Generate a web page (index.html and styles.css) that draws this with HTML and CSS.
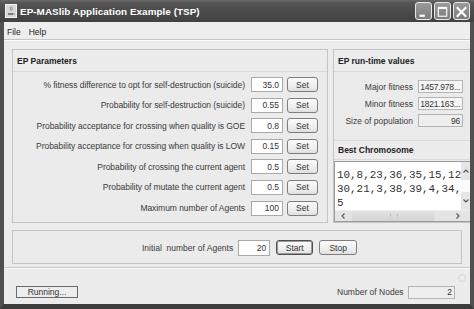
FILE: index.html
```html
<!DOCTYPE html>
<html>
<head>
<meta charset="utf-8">
<link rel="stylesheet" href="styles.css">
</head>
<body>
<div class="window">
  <div class="titlebar">
    <span class="app-icon">
      <svg width="12" height="14" viewBox="0 0 12 14">
        <rect x="0.5" y="0.5" width="11" height="13" fill="#d8d8d8" stroke="#f4f4f4"/>
        <path d="M3 9 h5 v2 h-5 z M8 9.5 h1.5 v1 h-1.5" fill="#7a7a7a"/>
        <path d="M5 3 q1.5 2 0 3.5 M6.5 2.5 q1.5 2 0 4" stroke="#8a8a8a" fill="none" stroke-width="0.9"/>
      </svg>
    </span>
    <span class="title">EP-MASlib Application Example (TSP)</span>
    <div class="controls">
      <span class="wbtn">
        <svg width="17" height="18" viewBox="0 0 17 18"><rect x="4" y="12" width="6" height="2.5" fill="#fff"/></svg>
      </span>
      <span class="wbtn">
        <svg width="16" height="18" viewBox="0 0 16 18"><rect x="3.5" y="4.5" width="9" height="9" fill="none" stroke="#fff" stroke-width="1.2"/><rect x="3.5" y="3.5" width="9" height="2.2" fill="#fff"/></svg>
      </span>
      <span class="wbtn">
        <svg width="17" height="18" viewBox="0 0 17 18"><path d="M4 4.5 L13 13.5 M13 4.5 L4 13.5" stroke="#fff" stroke-width="2.4" stroke-linecap="square"/></svg>
      </span>
    </div>
  </div>
  <div class="frame">
    <div class="menubar"><span class="menu">File</span><span class="menu">Help</span></div>
    <div class="content">
      <div class="top-row">
        <section class="panel params">
          <div class="panel-head">EP Parameters</div>
          <div class="param-grid">
            <span class="lbl">% fitness difference to opt for self-destruction (suicide)</span><span class="field">35.0</span><span class="btn">Set</span>
            <span class="lbl">Probability for self-destruction (suicide)</span><span class="field">0.55</span><span class="btn">Set</span>
            <span class="lbl">Probability acceptance for crossing when quality is GOE</span><span class="field">0.8</span><span class="btn">Set</span>
            <span class="lbl">Probability acceptance for crossing when quality is LOW</span><span class="field">0.15</span><span class="btn">Set</span>
            <span class="lbl">Probability of crossing the current agent</span><span class="field">0.5</span><span class="btn">Set</span>
            <span class="lbl">Probability of mutate the current agent</span><span class="field">0.5</span><span class="btn">Set</span>
            <span class="lbl">Maximum number of Agents</span><span class="field">100</span><span class="btn">Set</span>
          </div>
        </section>
        <section class="panel runtime">
          <div class="panel-head">EP run-time values</div>
          <div class="rt-grid">
            <span class="lbl">Major fitness</span><span class="field ro">1457.978...</span>
            <span class="lbl">Minor fitness</span><span class="field ro">1821.163...</span>
            <span class="lbl">Size of population</span><span class="field ro dim">96</span>
          </div>
          <div class="panel-head sub">Best Chromosome</div>
          <div class="chromo">
            <div class="chromo-main">
              <div class="chromo-text">10,8,23,36,35,15,12<br>30,21,3,38,39,4,34,<br>5</div>
              <div class="vscroll">
                <span class="arrow up">
                  <svg width="8" height="6" viewBox="0 0 8 6"><path d="M1.5 4.5 L4 2 L6.5 4.5" stroke="#555" fill="none" stroke-width="1.1"/></svg>
                </span>
                <span class="vtrack"></span>
                <span class="arrow dn">
                  <svg width="8" height="6" viewBox="0 0 8 6"><path d="M1.5 1.5 L4 4 L6.5 1.5" stroke="#555" fill="none" stroke-width="1.1"/></svg>
                </span>
              </div>
            </div>
            <div class="hscroll">
              <span class="harrow">
                <svg width="6" height="8" viewBox="0 0 6 8"><path d="M4.5 1.5 L2 4 L4.5 6.5" stroke="#555" fill="none" stroke-width="1.1"/></svg>
              </span>
              <span class="hthumb"><span class="grip"></span></span>
              <span class="harrow">
                <svg width="6" height="8" viewBox="0 0 6 8"><path d="M1.5 1.5 L4 4 L1.5 6.5" stroke="#555" fill="none" stroke-width="1.1"/></svg>
              </span>
            </div>
          </div>
        </section>
      </div>
      <section class="panel agents">
        <span class="lbl">Initial&nbsp; number of Agents</span>
        <span class="field wide">20</span>
        <span class="btn start">Start</span>
        <span class="btn stop">Stop</span>
      </section>
      <div class="sep"></div>
      <div class="status">
        <div class="busy-line"><span class="busy"></span></div>
        <div class="status-row">
          <span class="running">Running...</span>
          <span class="nodes-lbl">Number of Nodes</span>
          <span class="field ro dim nodes">2</span>
        </div>
      </div>
    </div>
  </div>
</div>
</body>
</html>
```
FILE: styles.css
```css
* { box-sizing: border-box; }
html, body { margin: 0; padding: 0; background: #4a4a4a; }
body { font-family: "Liberation Sans", Arial, sans-serif; font-size: 8.5px; color: #3a3a3a; }

.window { width: 474px; height: 309px; display: flex; flex-direction: column; overflow: hidden; }

.titlebar {
  height: 22px; flex: none; display: flex; align-items: center;
  background: linear-gradient(#6a6a6a 0px, #555 3px, #4a4a4a 12px, #424242 22px);
  padding-left: 5px;
}
.app-icon { width: 12px; height: 14px; display: flex; }
.title { color: #fff; font-weight: bold; font-size: 9.9px; margin-left: 3px; letter-spacing: 0.05px; }
.controls { margin-left: auto; display: flex; gap: 2px; padding-right: 4px; }
.wbtn {
  width: 17px; height: 18px; border: 1px solid #e8e8e8; border-radius: 3px;
  background: linear-gradient(#9a9a9a, #7d7d7d); display: flex;
}
.wbtn svg { display: block; }

.frame {
  flex: 1; display: flex; flex-direction: column;
  border-left: 4px solid #505050; border-right: 4px solid #505050; border-bottom: 5px solid #3c3c3c;
  background: #ececec; min-height: 0;
}
.menubar {
  height: 18px; flex: none; display: flex; align-items: center; gap: 8px;
  padding-left: 3px; background: #eeeeee; border-bottom: 1px solid #c6c6c6;
  box-shadow: 0 1px 0 #fafafa;
}
.menu { font-size: 8.5px; color: #222; padding-top: 2px; }

.content { flex: 1; overflow: hidden; padding: 9px 0 0 8px; display: flex; flex-direction: column; }

.top-row { display: flex; gap: 5px; height: 174px; flex: none; }

.panel { border: 1px solid #c4c4c4; background: #ebebeb; }
.panel-head {
  height: 22px; font-weight: bold; color: #222; font-size: 8.5px;
  display: flex; align-items: center; padding-left: 4px;
  border-bottom: 1px solid #dadada; background: #ececec;
}

.params { width: 316px; flex: none; }
.param-grid {
  display: grid; grid-template-columns: 233px 33px 31px; column-gap: 4px;
  grid-auto-rows: 15px; row-gap: 5.6px; padding-top: 5px; align-items: center;
}
.param-grid .lbl { text-align: right; padding-right: 1px; white-space: nowrap; letter-spacing: -0.05px; }
.param-grid .field { margin-left: 1px; }

.field {
  height: 15px; background: #fff; border: 1px solid #a9a9a9;
  display: flex; align-items: center; justify-content: flex-end; padding-right: 3px;
  color: #333; white-space: nowrap; overflow: hidden;
}
.field.ro { background: #f6f6f6; border-color: #b4b4b4; height: 13px; padding-right: 2px; letter-spacing: -0.25px; }
.field.dim { background: #eeeeee; }

.btn {
  height: 15px; border: 1px solid #7e7e7e; border-radius: 3px;
  background: linear-gradient(#fbfbfb, #ececec 70%, #dedede);
  display: flex; align-items: center; justify-content: center; color: #333;
}

.runtime { width: 141px; flex: none; display: flex; flex-direction: column; }
.rt-grid {
  display: grid; grid-template-columns: 79px 45px; column-gap: 5px;
  grid-template-rows: 13px 13px 13px; row-gap: 4px; padding-top: 8px; align-items: center;
}
.rt-grid .lbl { text-align: right; white-space: nowrap; }
.panel-head.sub { margin-top: 13px; height: 20px; border-top: 1px solid #dadada; }

.chromo {
  margin-top: 1px; flex: 1; margin-right: 3px; border: 1px solid #9c9c9c; border-right: none;
  background: #fff; display: flex; flex-direction: column; overflow: hidden;
}
.chromo-main { flex: 1; display: flex; }
.chromo-text {
  flex: 1; font-family: "Liberation Mono", "Courier New", monospace; font-size: 10.9px;
  line-height: 14px; padding: 6px 0 0 2px; color: #333; white-space: nowrap; overflow: hidden;
}
.vscroll { width: 9px; display: flex; flex-direction: column; background: #ededed; }
.vscroll .arrow { height: 18px; display: flex; align-items: center; justify-content: center; background: #e6e6e6; }
.vtrack { flex: 1; background: #fbfbfb; }
.hscroll {
  height: 11px; flex: none; display: flex; align-items: center; background: #e4e4e4;
  padding: 0 2px; border-top: 1px solid #efefef;
}
.harrow { width: 12px; height: 10px; display: flex; align-items: center; justify-content: center; }
.hthumb {
  height: 10px; width: 83px; margin-left: 3px; background: linear-gradient(#e3e3e3, #d4d4d4);
  border-radius: 2px; display: flex; align-items: center; justify-content: center;
}
.grip { width: 8px; height: 4px; border-left: 1px dotted #bbb; border-right: 1px dotted #bbb; }
.hscroll .harrow:last-child { margin-left: auto; margin-right: 4px; }

.agents {
  margin-top: 7px; width: 450px; height: 34px; flex: none;
  display: flex; align-items: center; padding-left: 129px; padding-top: 1px;
}
.agents .lbl { white-space: nowrap; }
.field.wide { width: 32px; margin-left: 5px; height: 16px; }
.btn.start { width: 37px; margin-left: 6px; border: 1px solid #4e4e4e; box-shadow: inset 0 0 0 1px #9a9a9a; }
.btn.stop { width: 38px; margin-left: 6px; }

.sep { margin-top: 3px; margin-left: -8px; height: 2px; border-top: 1px solid #c8c8c8; border-bottom: 1px solid #fafafa; flex: none; }

.status { display: flex; flex-direction: column; }
.busy-line { height: 13px; display: flex; justify-content: flex-end; padding: 5px 4px 0 0; }
.busy { width: 8px; height: 8px; border-radius: 50%; border: 1px solid #d6d6d6; }
.status-row { display: flex; align-items: center; height: 14px; margin-top: 3px; padding-left: 4px; }
.running {
  width: 62px; height: 12px; border: 1px solid #6a6a6a; background: #ededed;
  display: flex; align-items: center; justify-content: center; color: #333;
}
.nodes-lbl { margin-left: 259px; }
.field.nodes { width: 47px; margin-left: 4px; height: 13px; }
```
